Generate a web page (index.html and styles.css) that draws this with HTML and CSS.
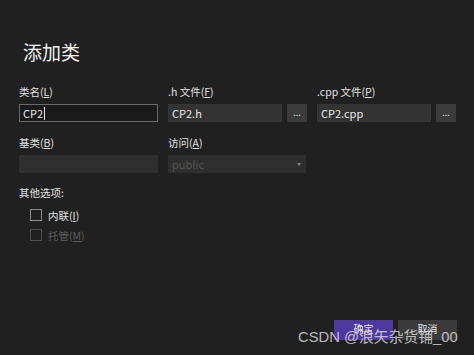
FILE: index.html
```html
<!DOCTYPE html>
<html lang="zh">
<head>
<meta charset="utf-8">
<link rel="stylesheet" href="styles.css">
</head>
<body>
<div class="dialog">
  <h1 class="title">添加类</h1>
  <div class="grid">
    <div class="field">
      <div class="label">类名(<u>L</u>)</div>
      <div class="row"><div class="input active">CP2<span class="caret"></span></div></div>
    </div>
    <div class="field">
      <div class="label">.h 文件(<u>F</u>)</div>
      <div class="row"><div class="input filled">CP2.h</div><div class="dots">...</div></div>
    </div>
    <div class="field">
      <div class="label">.cpp 文件(<u>P</u>)</div>
      <div class="row"><div class="input filled">CP2.cpp</div><div class="dots">...</div></div>
    </div>
    <div class="field">
      <div class="label">基类(<u>B</u>)</div>
      <div class="row"><div class="input disabled"></div></div>
    </div>
    <div class="field">
      <div class="label">访问(<u>A</u>)</div>
      <div class="row"><div class="input disabled select"><span>public</span><span class="arrow"></span></div></div>
    </div>
  </div>
  <div class="options">
    <div class="label">其他选项:</div>
    <div class="check"><span class="box"></span><span>内联(<u>I</u>)</span></div>
    <div class="check off"><span class="box"></span><span>托管(<u>M</u>)</span></div>
  </div>
  <div class="footer">
    <div class="btn primary">确定</div>
    <div class="btn">取消</div>
  </div>
  <div class="watermark">CSDN @浪矢杂货铺_00</div>
</div>
</body>
</html>
```
FILE: styles.css
```css
html, body {
  margin: 0;
  padding: 0;
  background: #202020;
}
body {
  font-family: "Noto Sans CJK SC", "Noto Sans", sans-serif;
  color: #e4e4e4;
}
.dialog {
  position: relative;
  height: 355px;
  box-sizing: border-box;
  padding: 38px 17px 15px 19px;
  display: flex;
  flex-direction: column;
}
.title {
  margin: 0 0 0 4px;
  font-size: 19px;
  line-height: 28px;
  font-weight: 400;
  color: #f2f2f2;
}
.grid {
  margin-top: 19px;
  display: grid;
  grid-template-columns: 139px 139px 139px;
  column-gap: 10px;
  row-gap: 14px;
}
.label {
  font-size: 10.5px;
  line-height: 14px;
  height: 14px;
  color: #e2e2e2;
}
.label u { text-decoration-thickness: 1px; text-underline-offset: 1px; }
.row {
  margin-top: 5px;
  display: flex;
  gap: 5px;
  height: 18px;
}
.input {
  flex: 1;
  box-sizing: border-box;
  height: 18px;
  font-size: 11px;
  line-height: 16px;
  padding: 0 3px;
  border: 1px solid #353535;
  background: #333333;
  color: #e8e8e8;
  display: flex;
  align-items: center;
}
.input.active {
  background: #1a1a1a;
  border-color: #6a6a6a;
}
.caret {
  display: inline-block;
  width: 1px;
  height: 13px;
  background: #e8e8e8;
  margin-left: 1px;
}
.input.disabled {
  background: #2f2f2f;
  border-color: #2f2f2f;
  color: #555;
}
.select {
  flex: 0 0 138px;
  justify-content: space-between;
}
.arrow {
  width: 0;
  height: 0;
  border-left: 2.5px solid transparent;
  border-right: 2.5px solid transparent;
  border-top: 3px solid #8a8a8a;
  margin-right: 1px;
}
.dots {
  flex: 0 0 20px;
  height: 18px;
  background: #3b3b3b;
  color: #e0e0e0;
  font-size: 9px;
  line-height: 18px;
  text-align: center;
}
.options {
  margin-top: 13px;
  display: flex;
  flex-direction: column;
}
.check {
  display: flex;
  align-items: center;
  gap: 6px;
  margin-left: 11px;
  height: 20px;
  font-size: 10.5px;
  color: #e2e2e2;
}
.options .label + .check { margin-top: 5px; }
.box {
  box-sizing: border-box;
  width: 12px;
  height: 12px;
  border: 1px solid #8a8a8a;
}
.check.off { color: #5e5e5e; }
.check.off .box { border-color: #505050; }
.footer {
  margin-top: auto;
  display: flex;
  justify-content: flex-end;
  gap: 5px;
}
.btn {
  width: 59px;
  height: 20px;
  line-height: 17px;
  text-align: center;
  font-size: 10px;
  background: #3a3a3a;
  color: #e8e8e8;
}
.btn.primary {
  background: #4d3a9e;
}
.watermark {
  position: absolute;
  left: 298px;
  top: 328px;
  font-family: "Liberation Sans", "Noto Sans CJK SC", sans-serif;
  font-size: 14.8px;
  line-height: 18px;
  color: rgba(225, 225, 225, 0.8);
  white-space: nowrap;
}
```
